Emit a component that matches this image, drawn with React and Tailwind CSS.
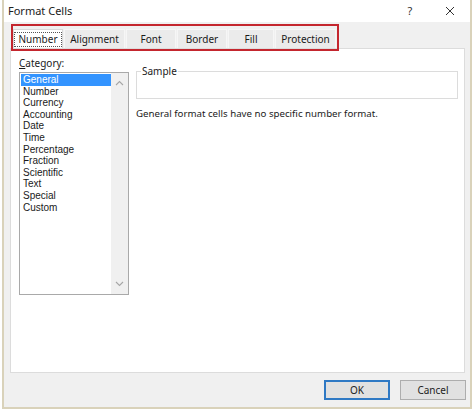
import React from "react";

const tabs = [
  { label: "Number", width: "w-[50px]" },
  { label: "Alignment", width: "w-[61px]" },
  { label: "Font", width: "w-[50px]" },
  { label: "Border", width: "w-[50px]" },
  { label: "Fill", width: "w-[46px]" },
  { label: "Protection", width: "w-[61px]" },
];

const categories = [
  "General",
  "Number",
  "Currency",
  "Accounting",
  "Date",
  "Time",
  "Percentage",
  "Fraction",
  "Scientific",
  "Text",
  "Special",
  "Custom",
];

const font = { fontFamily: '"Noto Sans", "Open Sans", sans-serif' };
const listFont = { fontFamily: '"Liberation Sans", Arial, sans-serif' };

const Chevron = ({ down }) => (
  <svg width="9" height="6" viewBox="0 0 9 6" className="text-[#a6a6a6]">
    <path
      d={down ? "M1 1 L4.5 4.5 L8 1" : "M1 5 L4.5 1.5 L8 5"}
      fill="none"
      stroke="currentColor"
      strokeWidth="1.1"
    />
  </svg>
);

const App = () => {
  return (
    <div className="w-[474px] h-[412px] bg-white text-[#1a1a1a]" style={font}>
      <div className="relative ml-[2px] w-[470px] h-[409px] flex flex-col bg-white border-l-[2px] border-r-[2px] border-b-[2px] border-[#d9d2ba]">
        {/* title bar */}
        <div className="h-[22px] flex items-center bg-white">
          <span className="pl-[4px] text-[11px] text-[#222]">Format Cells</span>
          <div className="ml-auto flex items-center">
            <span className="w-[40px] text-center text-[11px] text-[#333]">?</span>
            <span className="w-[40px] flex justify-center">
              <svg width="10" height="10" viewBox="0 0 10 10">
                <path d="M1 1 L9 9 M9 1 L1 9" stroke="#333" strokeWidth="1" />
              </svg>
            </span>
          </div>
        </div>

        {/* body */}
        <div className="flex-1 flex flex-col bg-[#f0f0f0] px-[6px]">
          <div className="flex mt-[7px] ml-[3px] h-[19px] items-end">
            {tabs.map((tab, i) => (
              <div
                key={tab.label}
                className={`${tab.width} h-[19px] flex items-center justify-center text-[10px] border border-b-0 ${
                  i === 0
                    ? "bg-white border-[#d9d9d9]"
                    : "bg-[#ebebeb] border-[#f6f6f6] ml-[1px]"
                }`}
              >
                {i === 0 ? (
                  <span className="border border-dotted border-[#555] px-[3px] leading-[13px]">
                    {tab.label}
                  </span>
                ) : (
                  tab.label
                )}
              </div>
            ))}
          </div>

          {/* panel */}
          <div className="w-[455px] h-[325px] bg-white border border-[#dcdcdc] flex pt-[7px] pl-[8px]">
            <div className="flex flex-col">
              <span className="text-[10px] leading-[14px]">
                <span className="underline">C</span>ategory:
              </span>
              <div className="mt-[2px] w-[110px] h-[223px] border border-[#a9a9a9] flex">
                <div className="flex-1 flex flex-col pt-[1px] pl-[1px]" style={listFont}>
                  {categories.map((c, i) => (
                    <div
                      key={c}
                      className={`h-[11.6px] leading-[11.6px] text-[10px] pl-[2px] ${
                        i === 0 ? "bg-[#3394ff] text-white" : ""
                      }`}
                    >
                      {c}
                    </div>
                  ))}
                </div>
                <div className="w-[17px] bg-[#f0f0f0] flex flex-col items-center justify-between py-[7px]">
                  <Chevron />
                  <Chevron down />
                </div>
              </div>
            </div>

            <div className="ml-[7px] flex flex-col pt-[15px]">
              <fieldset className="w-[322px] h-[34px] border border-[#dcdcdc] -mt-[6px]">
                <legend className="ml-[4px] px-[1px] text-[10px] leading-[12px]">Sample</legend>
              </fieldset>
              <span className="mt-[8px] text-[9.7px] leading-[14px]">
                General format cells have no specific number format.
              </span>
            </div>
          </div>

          <div className="flex justify-end gap-[10px] mt-[7px] -mr-[2px]">
            <button className="w-[66px] h-[20px] bg-[#e1e1e1] border-[2px] border-[#2f79c4] text-[10px] text-[#222]">
              OK
            </button>
            <button className="w-[66px] h-[20px] bg-[#e1e1e1] border border-[#adadad] text-[10px] text-[#222]">
              Cancel
            </button>
          </div>
        </div>

        {/* annotation */}
        <div className="absolute left-[7px] top-[24px] w-[328px] h-[27px] border-[2px] border-[#c4262e] pointer-events-none" />
      </div>
    </div>
  );
};

export default App;
